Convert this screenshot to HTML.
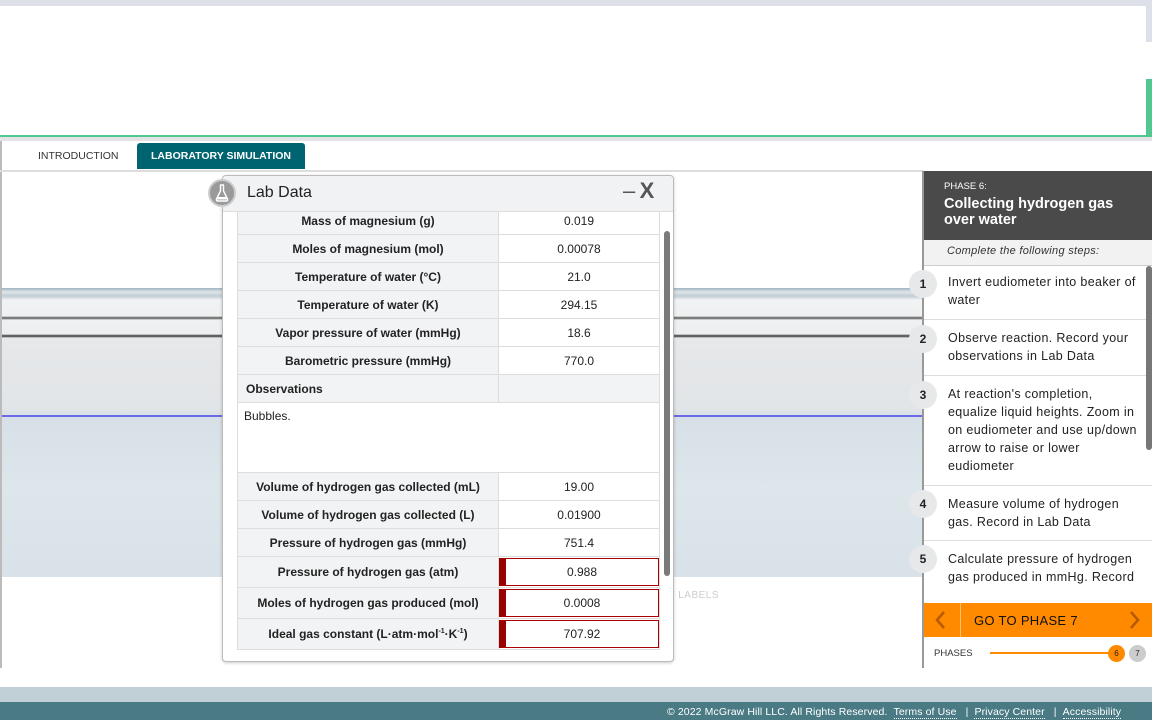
<!DOCTYPE html>
<html><head><meta charset="utf-8"><style>
*{box-sizing:border-box;margin:0;padding:0}
body{width:1152px;height:720px;position:relative;overflow:hidden;background:#fff;font-family:"Liberation Sans",sans-serif;color:#222}
.a{position:absolute}
.scene{left:2px;top:288px;width:920px;height:289px;background:linear-gradient(#9fb3bf 0,#dfe6ea 4px,#c0ccd4 8px,#f2f3f4 12px,#eff0f1 28px,#555 30px,#eef0f1 32px,#eceef0 46px,#333 48px,#e6e8ea 50px,#e2e5e7 120px,#d6e0e6 130px,#dde6eb 200px,#d8e2e8 289px)}
.wl{left:2px;top:415px;width:920px;height:2px;background:#6a6ae8}
table{border-collapse:collapse;font-size:12px}
td{height:28px;border:1px solid #ddd;text-align:center}
td.l{background:#f2f3f5;font-weight:bold;width:261px;color:#222}
td.v{background:#fff;width:161px}
td.rr{padding:1px 0;height:30px}
.rb{height:28px;border:1px solid #a00;border-left:8px solid #900;line-height:26px;margin-left:-1px}
.step{left:924px;width:228px;border-bottom:1px solid #ddd;font-size:12.5px;letter-spacing:0.35px;line-height:18px;color:#222;padding-left:24px;padding-right:8px}
.num{left:-15px;width:28px;height:28px;border-radius:50%;background:#e6e8ea;font-weight:bold;font-size:12px;text-align:center;line-height:28px;letter-spacing:0}
</style></head><body>
<div class="a" style="left:0;top:0;width:1152px;height:6px;background:#dde0e8"></div>
<div class="a" style="left:1146px;top:0;width:6px;height:42px;background:#dde0e8"></div>
<div class="a" style="left:1146px;top:79px;width:6px;height:58px;background:#52c78f"></div>
<div class="a" style="left:0;top:135px;width:1152px;height:2px;background:#52c78f"></div>
<div class="a" style="left:0;top:137px;width:1152px;height:4px;background:#e2e3e4"></div>
<div class="a" style="left:0;top:141px;width:2px;height:527px;background:#bbb"></div>
<div class="a" style="left:38px;top:150px;font-size:10.5px;color:#333">INTRODUCTION</div>
<div class="a" style="left:137px;top:143px;width:168px;height:26px;background:#006370;border-radius:3px 3px 0 0;color:#fff;font-size:10.5px;font-weight:bold;text-align:center;line-height:26px">LABORATORY SIMULATION</div>
<div class="a" style="left:0;top:170px;width:924px;height:2px;background:#ddd"></div>
<div class="a scene"></div><div class="a wl"></div>
<div class="a" style="left:665px;top:590px;font-size:10px;color:#ccc;letter-spacing:.5px">W LABELS</div>
<!-- right panel -->
<div class="a" style="left:922px;top:171px;width:2px;height:497px;background:#999"></div>
<div class="a" style="left:924px;top:171px;width:228px;height:69px;background:#4a4a4a;color:#fff;padding:10px 20px">
<div style="font-size:9.5px">PHASE 6:</div><div style="font-size:14.5px;font-weight:bold;line-height:16px;margin-top:4px">Collecting hydrogen gas over water</div></div>
<div class="a" style="left:924px;top:240px;width:228px;height:26px;background:#f2f2f2;border-bottom:1px solid #ccc;font-size:11px;letter-spacing:.3px;font-style:italic;padding:5px 0 0 23px;color:#333">Complete the following steps:</div>
<div class="a step" style="top:266px;height:54px;padding-top:7px"><div class="a num" style="top:4px">1</div>Invert eudiometer into beaker of water</div>
<div class="a step" style="top:320px;height:56px;padding-top:9px"><div class="a num" style="top:5px">2</div>Observe reaction. Record your observations in Lab Data</div>
<div class="a step" style="top:376px;height:110px;padding-top:9px"><div class="a num" style="top:5px">3</div>At reaction's completion, equalize liquid heights. Zoom in on eudiometer and use up/down arrow to raise or lower eudiometer</div>
<div class="a step" style="top:486px;height:55px;padding-top:9px"><div class="a num" style="top:4px">4</div>Measure volume of hydrogen gas. Record in Lab Data</div>
<div class="a step" style="top:541px;height:62px;padding-top:9px;border:0"><div class="a num" style="top:4px">5</div>Calculate pressure of hydrogen gas produced in mmHg. Record</div>
<div class="a" style="left:1146px;top:266px;width:6px;height:184px;background:#777;border-radius:3px"></div>
<div class="a" style="left:924px;top:603px;width:228px;height:34px;background:#ff8a00"></div>
<div class="a" style="left:960px;top:603px;width:1px;height:34px;background:#ffc070"></div>
<svg class="a" style="left:934px;top:610px" width="12" height="20"><path d="M10 2L3 10l7 8" fill="none" stroke="#b55a00" stroke-width="2.5"/></svg>
<svg class="a" style="left:1129px;top:610px" width="12" height="20"><path d="M2 2l7 8-7 8" fill="none" stroke="#b55a00" stroke-width="2.5"/></svg>
<div class="a" style="left:974px;top:613px;font-size:13px;color:#111;letter-spacing:.3px">GO TO PHASE 7</div>
<div class="a" style="left:934px;top:648px;font-size:9.5px;color:#333">PHASES</div>
<div class="a" style="left:990px;top:652px;width:122px;height:2px;background:#ff8a00"></div>
<div class="a" style="left:1108px;top:645px;width:17px;height:17px;border-radius:50%;background:#ff8a00;font-size:8px;text-align:center;line-height:17px">6</div>
<div class="a" style="left:1129px;top:645px;width:17px;height:17px;border-radius:50%;background:#ccc;font-size:8px;text-align:center;line-height:17px">7</div>
<!-- footer -->
<div class="a" style="left:0;top:687px;width:1152px;height:15px;background:#c0d0d6"></div>
<div class="a" style="left:0;top:702px;width:1152px;height:18px;background:#4a7a84;color:#fff;font-size:10.5px;letter-spacing:.1px;padding:4px 0 0 667px;white-space:nowrap">© 2022 McGraw Hill LLC. All Rights Reserved. &nbsp;<span style="border-bottom:1px dotted #fff">Terms of Use</span> &nbsp; | &nbsp;<span style="border-bottom:1px dotted #fff">Privacy Center</span> &nbsp; | &nbsp;<span style="border-bottom:1px dotted #fff">Accessibility</span></div>
<!-- dialog -->
<div class="a" style="left:222px;top:175px;width:452px;height:487px;background:#fff;border:1px solid #bbb;border-radius:4px;box-shadow:0 1px 3px rgba(0,0,0,.2);overflow:hidden">
<div class="a" style="left:14px;top:30px"><table>
<tr><td class="l">Mass of magnesium (g)</td><td class="v">0.019</td></tr>
<tr><td class="l">Moles of magnesium (mol)</td><td class="v">0.00078</td></tr>
<tr><td class="l">Temperature of water (°C)</td><td class="v">21.0</td></tr>
<tr><td class="l">Temperature of water (K)</td><td class="v">294.15</td></tr>
<tr><td class="l">Vapor pressure of water (mmHg)</td><td class="v">18.6</td></tr>
<tr><td class="l">Barometric pressure (mmHg)</td><td class="v">770.0</td></tr>
<tr><td class="l" style="text-align:left;padding-left:8px">Observations</td><td class="v" style="background:#f2f3f5"></td></tr>
<tr><td colspan="2" style="height:70px;text-align:left;vertical-align:top;padding:6px 6px;background:#fff">Bubbles.</td></tr>
<tr><td class="l">Volume of hydrogen gas collected (mL)</td><td class="v">19.00</td></tr>
<tr><td class="l">Volume of hydrogen gas collected (L)</td><td class="v">0.01900</td></tr>
<tr><td class="l">Pressure of hydrogen gas (mmHg)</td><td class="v">751.4</td></tr>
<tr><td class="l" style="height:30px">Pressure of hydrogen gas (atm)</td><td class="v rr"><div class="rb">0.988</div></td></tr>
<tr><td class="l" style="height:30px">Moles of hydrogen gas produced (mol)</td><td class="v rr"><div class="rb">0.0008</div></td></tr>
<tr><td class="l" style="height:30px">Ideal gas constant (L·atm·mol<sup style="font-size:7px">-1</sup>·K<sup style="font-size:7px">-1</sup>)</td><td class="v rr"><div class="rb">707.92</div></td></tr>
</table></div>
<div class="a" style="left:0;top:0;width:452px;height:36px;background:#f1f2f4;border-bottom:1px solid #ddd"></div>
<div class="a" style="left:24px;top:8px;font-size:16px;color:#222">Lab Data</div>
<div class="a" style="left:400px;top:2px;font-size:22px;color:#555">–&thinsp;<b>X</b></div>
<div class="a" style="left:441px;top:55px;width:6px;height:345px;background:#7a7a7a;border-radius:3px"></div>
</div>
<div class="a" style="left:208px;top:179px;width:28px;height:28px;border-radius:50%;background:#9a9a9a;border:2px solid #ccc"></div>
<svg class="a" style="left:215px;top:184px" width="14" height="18" viewBox="0 0 14 18"><path d="M5 1h4M5.5 1v6L1.5 15c-.5 1 0 2 1 2h9c1 0 1.5-1 1-2L8.5 7V1" fill="none" stroke="#fff" stroke-width="1.4"/><path d="M3 13h8l1 2.5H2z" fill="#fff"/></svg>
</body></html>
